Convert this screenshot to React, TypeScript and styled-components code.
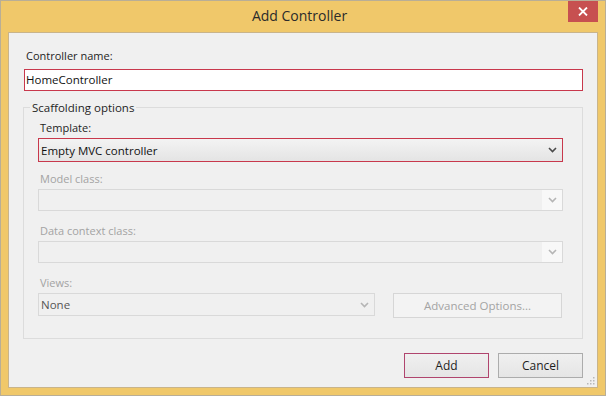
import React from 'react'
import styled, { createGlobalStyle } from 'styled-components'

const GlobalStyle = createGlobalStyle`
  html, body {
    margin: 0;
    padding: 0;
    background: #ffffff;
  }
  body {
    font-family: "Segoe UI", "Open Sans", "Noto Sans", sans-serif;
    font-size: 11px;
  }
`

const Frame = styled.div`
  width: 606px;
  height: 396px;
  box-sizing: border-box;
  border: 1px solid #b9ae96;
  background: #f0c86a;
  display: flex;
  flex-direction: column;
`

const TitleBar = styled.div`
  height: 31px;
  display: grid;
  grid-template-columns: 1fr auto 1fr;
  align-items: start;
  padding-right: 7px;
`

const Title = styled.div`
  grid-column: 2;
  font-size: 14px;
  color: #2b2b2b;
  line-height: 30px;
`

const CloseButton = styled.div`
  grid-column: 3;
  justify-self: end;
  width: 30px;
  height: 21px;
  background: #c75050;
  color: #ffffff;
  display: flex;
  align-items: center;
  justify-content: center;
`

const Client = styled.div`
  position: relative;
  flex: 1;
  margin: 0 7px 7px 7px;
  border: 1px solid #c9b48a;
  background: #f0f0f0;
  padding: 15px 14px 0 15px;
  display: flex;
  flex-direction: column;
`

const Label = styled.div<{ $disabled?: boolean; $mt?: number }>`
  line-height: 15px;
  padding-left: 2px;
  margin-top: ${p => p.$mt ?? 0}px;
  margin-bottom: 3px;
  color: ${p => (p.$disabled ? '#a3a3a3' : '#1e1e1e')};
`

const TextBox = styled.div`
  box-sizing: border-box;
  height: 22px;
  margin-top: 3px;
  border: 1px solid #c8384c;
  background: #ffffff;
  padding: 0 1px;
  line-height: 20px;
  font-size: 11.5px;
  color: #111111;
`

const Group = styled.fieldset`
  margin: 9px 0 0 -1px;
  padding: 5px 19px 20px 14px;
  border: 1px solid #dcdcdc;
  min-width: 0;
`

const Legend = styled.legend`
  padding: 0 2px;
  margin-left: -8px;
  line-height: 15px;
  font-size: 11.5px;
  color: #1e1e1e;
`

const Select = styled.div<{ $state: 'active' | 'disabled' | 'plain'; $h: number; $w?: number }>`
  box-sizing: border-box;
  height: ${p => p.$h}px;
  width: ${p => (p.$w ? `${p.$w}px` : 'auto')};
  display: flex;
  align-items: stretch;
  border: 1px solid ${p => (p.$state === 'active' ? '#c8384c' : '#d9d9d9')};
  background: ${p =>
    p.$state === 'active' ? 'linear-gradient(#f3f3f3, #e4e4e4)' : '#f0f0f0'};
  color: ${p => (p.$state === 'active' ? '#111111' : '#555555')};
  font-size: 11.5px;
`

const SelectText = styled.div`
  flex: 1;
  display: flex;
  align-items: center;
  padding-left: 2px;
`

const Arrow = styled.div<{ $light?: boolean }>`
  width: 20px;
  display: flex;
  align-items: center;
  justify-content: center;
  background: ${p => (p.$light ? '#f8f8f8' : 'transparent')};
`

const ViewsRow = styled.div`
  display: flex;
  align-items: flex-start;
  gap: 18px;
`

const FlatButton = styled.div`
  box-sizing: border-box;
  width: 169px;
  height: 25px;
  border: 1px solid #d6d6d6;
  background: #f3f3f3;
  color: #a3a3a3;
  display: flex;
  align-items: center;
  justify-content: center;
  font-size: 11.5px;
`

const ButtonRow = styled.div`
  display: flex;
  justify-content: flex-end;
  gap: 9px;
  margin-top: 14px;
`

const Button = styled.div<{ $default?: boolean }>`
  box-sizing: border-box;
  width: 85px;
  height: 25px;
  border: 1px solid ${p => (p.$default ? '#b0456e' : '#acacac')};
  background: linear-gradient(#f0f0f0, #e5e5e5);
  color: #1e1e1e;
  display: flex;
  align-items: center;
  justify-content: center;
  font-size: 12px;
`

const Grip = styled.svg`
  position: absolute;
  right: 2px;
  bottom: 2px;
`

const Chevron = ({ color }: { color: string }) => (
  <svg width="9" height="6" viewBox="0 0 9 6">
    <polyline points="1,1 4.5,4.5 8,1" fill="none" stroke={color} strokeWidth="1.6" />
  </svg>
)

const App = () => {
  return (
    <>
      <GlobalStyle />
      <Frame>
        <TitleBar>
          <Title>Add Controller</Title>
          <CloseButton>
            <svg width="10" height="9" viewBox="0 0 10 9">
              <path d="M1 0.5 L9 8.5 M9 0.5 L1 8.5" stroke="#ffffff" strokeWidth="1.8" />
            </svg>
          </CloseButton>
        </TitleBar>
        <Client>
          <Label>Controller name:</Label>
          <TextBox>HomeController</TextBox>
          <Group>
            <Legend>Scaffolding options</Legend>
            <Label>Template:</Label>
            <Select $state="active" $h={24}>
              <SelectText>Empty MVC controller</SelectText>
              <Arrow>
                <Chevron color="#4a4a4a" />
              </Arrow>
            </Select>
            <Label $disabled $mt={9}>Model class:</Label>
            <Select $state="disabled" $h={22}>
              <SelectText />
              <Arrow $light>
                <Chevron color="#b5b5b5" />
              </Arrow>
            </Select>
            <Label $disabled $mt={12}>Data context class:</Label>
            <Select $state="disabled" $h={22}>
              <SelectText />
              <Arrow $light>
                <Chevron color="#b5b5b5" />
              </Arrow>
            </Select>
            <Label $disabled $mt={12}>Views:</Label>
            <ViewsRow>
              <Select $state="plain" $h={23} $w={337}>
                <SelectText>None</SelectText>
                <Arrow>
                  <Chevron color="#b5b5b5" />
                </Arrow>
              </Select>
              <FlatButton>Advanced Options...</FlatButton>
            </ViewsRow>
          </Group>
          <ButtonRow>
            <Button $default>Add</Button>
            <Button>Cancel</Button>
          </ButtonRow>
          <Grip width="8" height="8" viewBox="0 0 8 8">
            <rect x="6" y="0" width="1.5" height="1.5" fill="#b8b8b8" />
            <rect x="3" y="3" width="1.5" height="1.5" fill="#b8b8b8" />
            <rect x="6" y="3" width="1.5" height="1.5" fill="#b8b8b8" />
            <rect x="0" y="6" width="1.5" height="1.5" fill="#b8b8b8" />
            <rect x="3" y="6" width="1.5" height="1.5" fill="#b8b8b8" />
            <rect x="6" y="6" width="1.5" height="1.5" fill="#b8b8b8" />
          </Grip>
        </Client>
      </Frame>
    </>
  )
}

export default App
